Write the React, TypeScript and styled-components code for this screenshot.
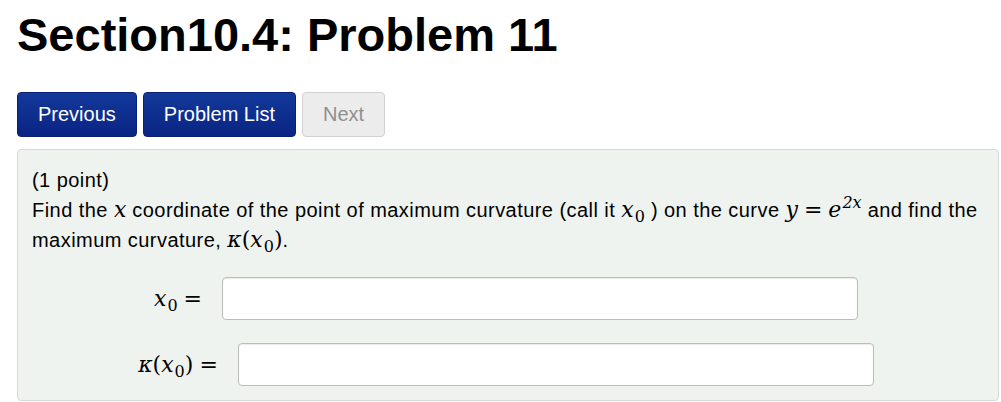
import styled, { createGlobalStyle } from 'styled-components';

const GlobalStyle = createGlobalStyle`
  body {
    margin: 0;
    background: #ffffff;
    color: #000000;
    font-family: "Liberation Sans", Arial, sans-serif;
    font-size: 20px;
  }
`;

const mathFont = '"DejaVu Serif", "Liberation Serif", serif';

const Page = styled.main`
  padding: 0 2px 0 17px;
`;

const Title = styled.h1`
  margin: 8px 0 0;
  font-size: 47px;
  line-height: 54px;
  font-weight: bold;
`;

const Nav = styled.nav`
  display: flex;
  gap: 6px;
  margin-top: 30px;
`;

const NavButton = styled.button<{ $disabled?: boolean }>`
  height: 45px;
  padding: 0 20px;
  border-radius: 4px;
  font-family: "Liberation Sans", Arial, sans-serif;
  font-size: 20px;
  cursor: ${(props) => (props.$disabled ? 'default' : 'pointer')};
  color: ${(props) => (props.$disabled ? '#8f8f8f' : '#ffffff')};
  border: 1px solid ${(props) => (props.$disabled ? '#d2d2d2' : '#0a2173')};
  background: ${(props) =>
    props.$disabled ? '#ececec' : 'linear-gradient(to bottom, #12399a, #0a2483)'};
`;

const ProblemBox = styled.section`
  box-sizing: border-box;
  width: 982px;
  margin-top: 12px;
  padding: 16px 18px 14px 14px;
  border: 1px solid #d8d8d8;
  border-radius: 4px;
  background: #eff3ef;
`;

const TextLine = styled.div`
  line-height: 29px;
  letter-spacing: 0.45px;
  white-space: nowrap;
`;

const MathVar = styled.span`
  font-family: ${mathFont};
  font-style: italic;
  font-size: 22px;
  letter-spacing: 0;
`;

const MathUp = styled.span`
  font-family: ${mathFont};
  font-style: normal;
  font-size: 22px;
  letter-spacing: 0;
`;

const Rel = styled(MathUp)`
  margin: 0 6px;
`;

const Sub = styled.sub`
  font-family: ${mathFont};
  font-style: normal;
  font-size: 16px;
  line-height: 0;
  vertical-align: -5px;
  margin-left: 1px;
`;

const Sup = styled.sup`
  font-family: ${mathFont};
  font-size: 16px;
  line-height: 0;
  vertical-align: 9px;
  margin-left: 1px;
`;

const AnswerList = styled.div`
  display: flex;
  flex-direction: column;
  align-items: center;
  gap: 23px;
  margin-top: 22px;
`;

const AnswerRow = styled.label`
  display: flex;
  align-items: center;
  gap: 14px;
`;

const AnswerInput = styled.input`
  box-sizing: border-box;
  width: 636px;
  height: 43px;
  border: 1px solid #bcbcbc;
  border-radius: 4px;
  background: #ffffff;
  box-shadow: inset 0 1px 1px rgba(0, 0, 0, 0.08);
  font-size: 18px;
  padding: 0 8px;
`;

const XZero = () => (
  <MathVar>
    x<Sub>0</Sub>
  </MathVar>
);

const KappaXZero = () => (
  <span>
    <MathVar>κ</MathVar>
    <MathUp>(</MathUp>
    <XZero />
    <MathUp>)</MathUp>
  </span>
);

export default function App() {
  return (
    <>
      <GlobalStyle />
      <Page>
        <Title>Section10.4: Problem 11</Title>
        <Nav>
          <NavButton>Previous</NavButton>
          <NavButton>Problem List</NavButton>
          <NavButton $disabled>Next</NavButton>
        </Nav>
        <ProblemBox>
          <TextLine>(1 point)</TextLine>
          <TextLine>
            Find the <MathVar>x</MathVar> coordinate of the point of maximum curvature (call it{' '}
            <XZero /> ) on the curve <MathVar>y</MathVar>
            <Rel>=</Rel>
            <MathVar>
              e
              <Sup>
                2<i>x</i>
              </Sup>
            </MathVar>{' '}
            and find the
            <br />
            maximum curvature, <KappaXZero />.
          </TextLine>
          <AnswerList>
            <AnswerRow>
              <span>
                <XZero />
                <Rel>=</Rel>
              </span>
              <AnswerInput type="text" />
            </AnswerRow>
            <AnswerRow>
              <span>
                <KappaXZero />
                <Rel>=</Rel>
              </span>
              <AnswerInput type="text" />
            </AnswerRow>
          </AnswerList>
        </ProblemBox>
      </Page>
    </>
  );
}
